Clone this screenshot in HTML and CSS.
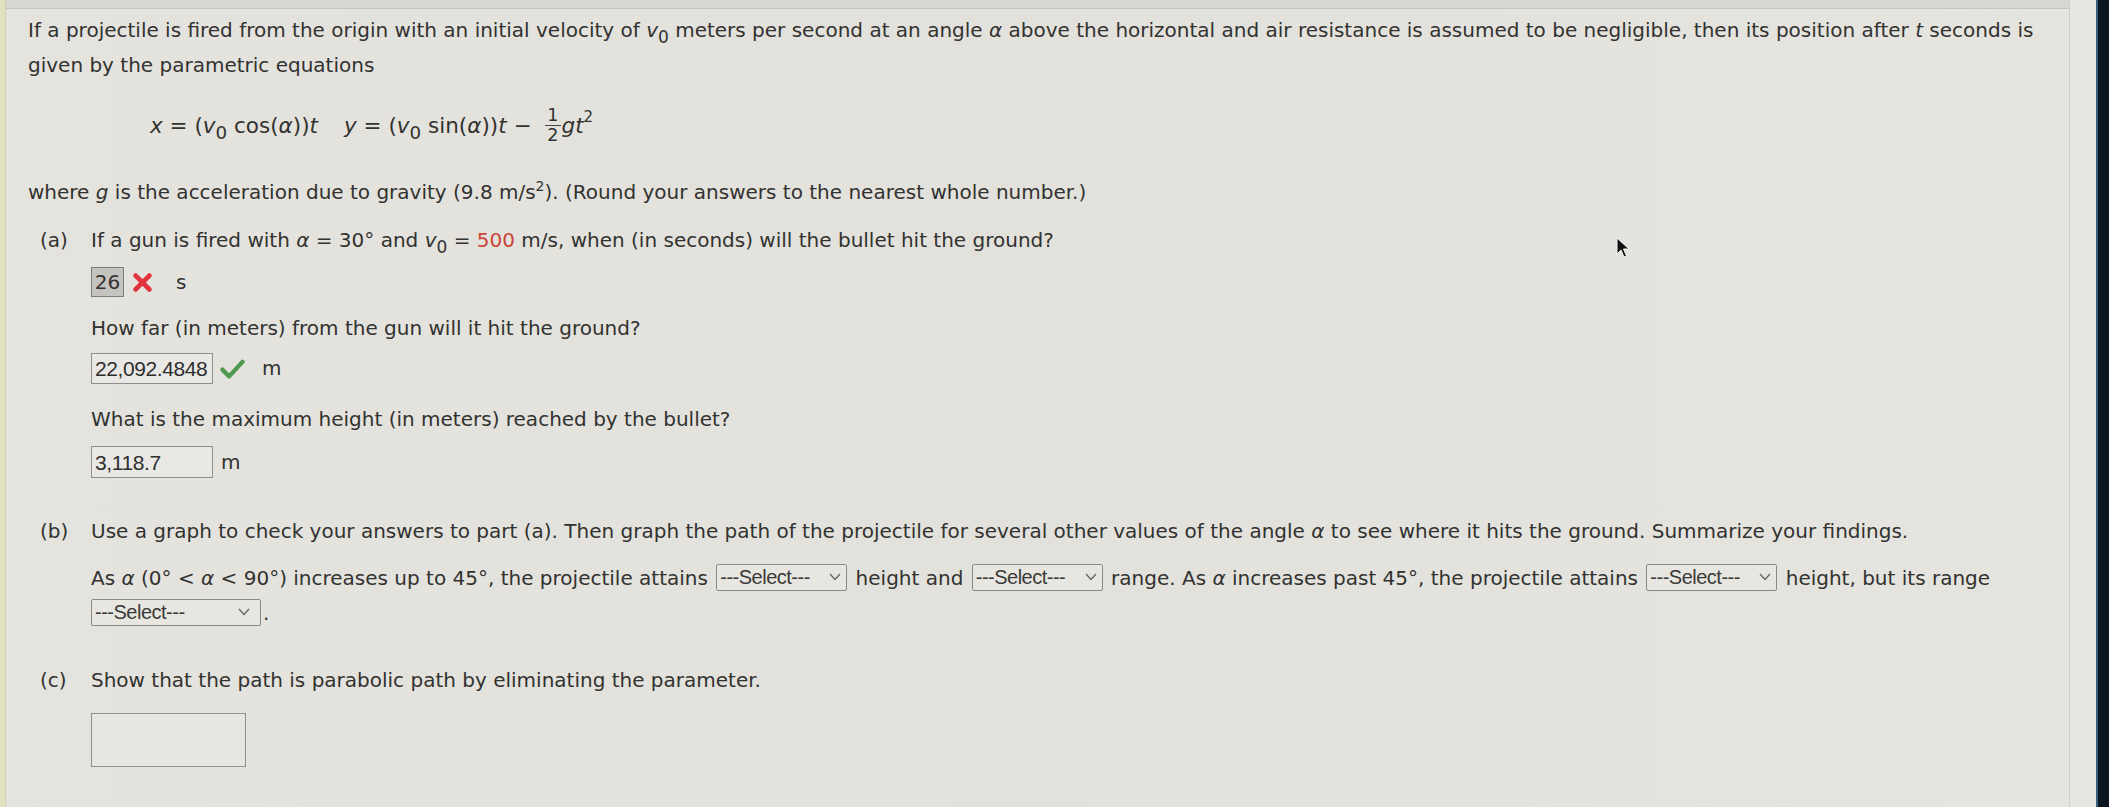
FILE: index.html
```html
<!DOCTYPE html>
<html>
<head>
<meta charset="utf-8">
<link rel="stylesheet" href="styles.css">
</head>
<body>
<div class="screen">
  <div class="leftbar"></div>
  <main class="page">
    <div class="topband"></div>
    <div class="content">
      <p class="intro">If a projectile is fired from the origin with an initial velocity of <i>v</i><sub>0</sub> meters per second at an angle <i>α</i> above the horizontal and air resistance is assumed to be negligible, then its position after <i>t</i> seconds is<br>given by the parametric equations</p>
      <div class="eq">
        <span class="eqpart"><i>x</i> = (<i>v</i><sub>0</sub> cos(<i>α</i>))<i>t</i></span>
        <span class="eqpart"><i>y</i> = (<i>v</i><sub>0</sub> sin(<i>α</i>))<i>t</i> − <span class="frac"><span class="num">1</span><span class="den">2</span></span><i>gt</i><sup>2</sup></span>
      </div>
      <p class="where">where <i>g</i> is the acceleration due to gravity (9.8 m/s<sup>2</sup>). (Round your answers to the nearest whole number.)</p>

      <section class="part part-a">
        <span class="label">(a)</span>
        <div class="body">
          <div class="row">If a gun is fired with <i>α</i> = 30° and <i>v</i><sub>0</sub> = <span class="red">500</span> m/s, when (in seconds) will the bullet hit the ground?</div>
          <div class="row ans ans-1">
            <span class="box wrong">26</span>
            <svg class="icon-x" viewBox="0 0 20 20" width="23" height="23"><path d="M4 4 L16 16 M16 4 L4 16" stroke="#e2343f" stroke-width="4.2" stroke-linecap="round" fill="none"/></svg>
            <span class="unit">s</span>
          </div>
          <div class="row q2">How far (in meters) from the gun will it hit the ground?</div>
          <div class="row ans ans-2">
            <span class="box field">22,092.4848</span>
            <svg class="icon-check" viewBox="0 0 24 20" width="27" height="23"><path d="M3 11 L9 17 L21 4" stroke="#4f9a52" stroke-width="3.8" stroke-linecap="round" stroke-linejoin="round" fill="none"/></svg>
            <span class="unit">m</span>
          </div>
          <div class="row q3">What is the maximum height (in meters) reached by the bullet?</div>
          <div class="row ans ans-3">
            <span class="box field">3,118.7</span>
            <span class="unit unit-close">m</span>
          </div>
        </div>
      </section>

      <section class="part part-b">
        <span class="label">(b)</span>
        <div class="body">
          <div class="row">Use a graph to check your answers to part (a). Then graph the path of the projectile for several other values of the angle <i>α</i> to see where it hits the ground. Summarize your findings.</div>
          <div class="row summary">As <i>α</i> (0° &lt; <i>α</i> &lt; 90°) increases up to 45°, the projectile attains <span class="select">---Select---<svg class="chev" viewBox="0 0 12 8" width="12" height="8"><polyline points="1,1 6,6.5 11,1" stroke="#666" stroke-width="1.3" fill="none"/></svg></span> height and <span class="select">---Select---<svg class="chev" viewBox="0 0 12 8" width="12" height="8"><polyline points="1,1 6,6.5 11,1" stroke="#666" stroke-width="1.3" fill="none"/></svg></span> range. As <i>α</i> increases past 45°, the projectile attains <span class="select">---Select---<svg class="chev" viewBox="0 0 12 8" width="12" height="8"><polyline points="1,1 6,6.5 11,1" stroke="#666" stroke-width="1.3" fill="none"/></svg></span> height, but its range<br><span class="select select-wide">---Select---<svg class="chev" viewBox="0 0 12 8" width="12" height="8"><polyline points="1,1 6,6.5 11,1" stroke="#666" stroke-width="1.3" fill="none"/></svg></span>.</div>
        </div>
      </section>

      <section class="part part-c">
        <span class="label">(c)</span>
        <div class="body">
          <div class="row">Show that the path is parabolic path by eliminating the parameter.</div>
          <div class="bigbox"></div>
        </div>
      </section>
    </div>
    <svg class="cursor" viewBox="0 0 14 22" width="14" height="22"><path d="M1 1 L1 17 L5 13 L8 20 L10.5 19 L7.5 12 L13 12 Z" fill="#111" stroke="#f4f4f4" stroke-width="1"/></svg>
  </main>
  <div class="rightstrip"></div>
  <div class="darkedge"></div>
</div>
</body>
</html>
```

FILE: styles.css
```css
* { box-sizing: border-box; margin: 0; padding: 0; }
html, body { width: 2109px; height: 807px; overflow: hidden; }
body {
  font-family: "DejaVu Sans", Verdana, sans-serif;
  font-size: 20px;
  color: #323230;
  background: #e2e1dc;
}
.screen { display: flex; width: 2109px; height: 807px; }
.leftbar { width: 6px; background: #e3e1c2; border-right: 1px solid #d3d1b4; }
.page {
  position: relative;
  flex: 1;
  display: flex;
  flex-direction: column;
  background: linear-gradient(90deg, #e4e3de 0%, #e2e1dc 50%, #e5e4df 100%);
}
.topband { height: 9px; background: #d8d7d2; border-bottom: 1px solid #c5c4bf; }
.content { padding: 3.5px 0 0 22px; line-height: 35px; }
.intro { white-space: nowrap; }
i { font-style: italic; }
sub { font-size: 0.85em; vertical-align: -0.35em; line-height: 0; }
sup { font-size: 0.7em; vertical-align: 0.6em; line-height: 0; }
.red { color: #cc4438; }

.eq {
  margin-top: 18px;
  height: 50px;
  display: flex;
  align-items: center;
  gap: 26px;
  padding-left: 122px;
  font-size: 21.5px;
}
.eqpart { white-space: nowrap; line-height: 50px; }
.frac {
  display: inline-flex;
  flex-direction: column;
  align-items: center;
  vertical-align: middle;
  font-size: 0.82em;
  line-height: 19px;
  margin: 0 1px 0 7px;
  position: relative;
  top: -1px;
}
.frac .num { border-bottom: 1px solid #444; padding: 0 2px; }
.eqpart sup { vertical-align: 0.75em; }

.where { margin-top: 24px; }

.part { display: flex; padding-left: 12px; }
.label { width: 51px; flex-shrink: 0; line-height: 35px; }
.body { display: flex; flex-direction: column; }
.row { line-height: 35px; white-space: nowrap; }
.part-a { margin-top: 13px; }
.part-b { margin-top: 34px; }
.part-c { margin-top: 32px; }

.ans { display: flex; align-items: center; height: 35px; }
.ans-1 { margin-top: 7px; }
.q2 { margin-top: 11px; }
.ans-2 { margin-top: 5px; }
.q3 { margin-top: 16px; }
.ans-3 { margin-top: 8px; }

.box {
  display: inline-flex;
  align-items: center;
  border: 1px solid #8f8f8b;
}
.wrong {
  height: 30px;
  width: 33px;
  justify-content: center;
  background: #c4c3bf;
  border-color: #7d7d79;
  font-size: 20px;
}
.icon-x { margin-left: 7px; }
.unit { margin-left: 22px; }
.field {
  height: 31px;
  width: 122px;
  padding-left: 3px;
  background: #e9e8e4;
  font-family: "Liberation Sans", Arial, sans-serif;
  font-size: 21px;
  letter-spacing: -0.4px;
  color: #2e2e2e;
}
.ans-3 .field { height: 32px; }
.icon-check { margin-left: 6px; }
.ans-2 .unit { margin-left: 16px; }
.unit-close { margin-left: 8px; }

.summary { margin-top: 12px; }
.select {
  display: inline-flex;
  align-items: center;
  justify-content: space-between;
  vertical-align: middle;
  height: 27px;
  width: 131px;
  padding: 0 5px 0 3px;
  margin: 0 2px;
  border: 1px solid #8a8a86;
  border-radius: 2px;
  background: #e7e6e1;
  font-family: "Liberation Sans", Arial, sans-serif;
  font-size: 20px;
  letter-spacing: -0.5px;
  line-height: 25px;
  color: #3a3a38;
  position: relative;
  top: -2px;
}
.select-wide { width: 170px; margin-left: 0; padding-right: 10px; }
.chev { flex-shrink: 0; }

.bigbox {
  margin-top: 15px;
  width: 155px;
  height: 54px;
  border: 1px solid #8f8f8b;
  background: #e7e6e1;
}

.cursor { position: absolute; left: 1610px; top: 237px; }

.rightstrip { width: 27px; background: #e7e6e2; border-left: 1px solid #cfcecb; }
.darkedge { width: 13px; background: #0c1620; border-left: 2px solid #36607f; }
```
